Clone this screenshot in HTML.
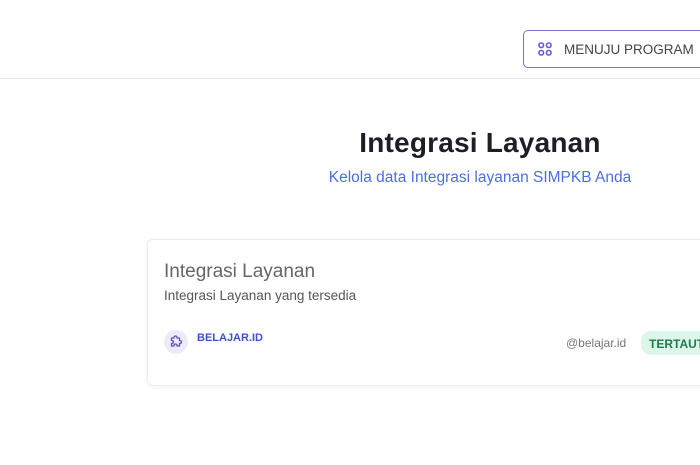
<!DOCTYPE html>
<html><head><meta charset="utf-8"><style>
*{margin:0;padding:0;box-sizing:border-box}
body{width:700px;height:465px;overflow:hidden;background:#fff;font-family:"Liberation Sans",sans-serif;position:relative}
.hdr{position:absolute;left:0;top:0;width:700px;height:79px;border-bottom:1px solid #e8e8ec}
.btn{position:absolute;left:523px;top:30px;width:200px;height:38px;border:1.5px solid #7b6fd6;border-radius:5px;display:flex;align-items:center;padding-left:14px;color:#444;font-size:13.5px}
.btn svg{margin-right:12px}
h1{position:absolute;left:0;width:960px;top:127px;text-align:center;font-size:28px;font-weight:bold;color:#1e1e28;letter-spacing:0.2px}
.sub{position:absolute;left:0;width:960px;top:169px;text-align:center;font-size:15.5px;color:#4c6fe0}
.card{position:absolute;left:147px;top:239px;width:600px;height:147px;border:1px solid #ececf0;border-radius:6px;box-shadow:0 1px 4px rgba(0,0,0,0.05)}
.t{position:absolute;left:16px;top:21px;font-size:19px;color:#666}
.d{position:absolute;left:16px;top:48px;font-size:13.5px;color:#555}
.ic{position:absolute;left:16px;top:90px;width:24px;height:24px;border-radius:50%;background:#ebebfa;display:flex;align-items:center;justify-content:center}
.nm{position:absolute;left:49px;top:92px;font-size:11px;font-weight:bold;color:#3f51c9}
.at{position:absolute;left:418px;top:96px;font-size:12px;color:#777}
.bd{position:absolute;left:493px;top:91px;width:80px;height:24px;border-radius:10px;background:#dcf7e9;color:#1f7a4c;font-size:12px;font-weight:bold;padding:6px 0 0 8px}
</style></head><body>
<div class="hdr"></div>
<div class="btn"><svg width="14" height="14" viewBox="0 0 14 14" fill="none" stroke="#6a5cd0" stroke-width="1.6"><rect x="1" y="1" width="4.5" height="4.5" rx="2"/><rect x="8.5" y="1" width="4.5" height="4.5" rx="2"/><rect x="1" y="8.5" width="4.5" height="4.5" rx="2"/><rect x="8.5" y="8.5" width="4.5" height="4.5" rx="2"/></svg>MENUJU PROGRAM</div>
<h1>Integrasi Layanan</h1>
<div class="sub">Kelola data Integrasi layanan SIMPKB Anda</div>
<div class="card">
<div class="t">Integrasi Layanan</div>
<div class="d">Integrasi Layanan yang tersedia</div>
<div class="ic"><svg width="14" height="14" viewBox="0 0 14 14" fill="none" stroke="#5b4fd0" stroke-width="1.3" stroke-linejoin="round"><path d="M5 2.5a1.5 1.5 0 0 1 3 0V3h2.5v2.5h.5a1.5 1.5 0 0 1 0 3h-.5V11H8v-.5a1.5 1.5 0 0 0-3 0V11H2.5V8.5H3a1.5 1.5 0 0 0 0-3h-.5V3H5z"/></svg></div>
<div class="nm">BELAJAR.ID</div>
<div class="at">@belajar.id</div>
<div class="bd">TERTAUT</div>
</div>
</body></html>
